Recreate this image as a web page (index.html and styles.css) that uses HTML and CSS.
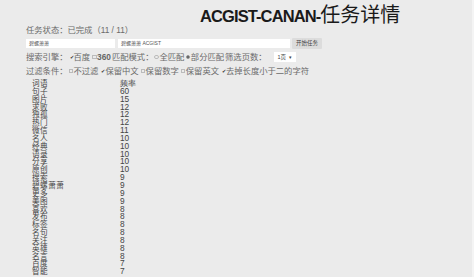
FILE: index.html
```html
<!DOCTYPE html>
<html>
<head>
<meta charset="utf-8">
<link rel="stylesheet" href="styles.css">
</head>
<body>
<div class="page">
  <h1 class="title"><span class="latin">ACGIST-CANAN-</span><span class="cjk">任务详情</span></h1>
  <div class="form">
    <div class="row">任务状态：已完成（11 / 11）</div>
    <div class="row inputs">
      <div class="field field-a">碧螺萧萧</div>
      <div class="field field-b">碧螺萧萧 ACGIST</div>
      <div class="btn">开始任务</div>
    </div>
    <div class="row">
      <span>搜索引擎：</span>
      <span class="opt"><span class="cb on">✔</span>百度</span>
      <span class="opt"><span class="cb"></span><span class="num">360</span></span>
      <span>匹配模式：</span>
      <span class="opt"><span class="rb"></span>全匹配</span>
      <span class="opt"><span class="rb on"></span>部分匹配</span>
      <span>筛选页数：</span>
      <span class="select">1页 <span class="caret">▾</span></span>
    </div>
    <div class="row">
      <span>过滤条件：</span>
      <span class="opt"><span class="cb"></span>不过滤</span>
      <span class="opt"><span class="cb on">✔</span>保留中文</span>
      <span class="opt"><span class="cb"></span>保留数字</span>
      <span class="opt"><span class="cb"></span>保留英文</span>
      <span class="opt"><span class="cb on">✔</span>去掉长度小于二的字符</span>
    </div>
  </div>
  <div class="words">
    <div class="w head">词语</div><div class="f head">频率</div>
    <div class="w">句子</div><div class="f">60</div>
    <div class="w">图片</div><div class="f">15</div>
    <div class="w">求败</div><div class="f">12</div>
    <div class="w">独孤</div><div class="f">12</div>
    <div class="w">热门</div><div class="f">12</div>
    <div class="w">微信</div><div class="f">11</div>
    <div class="w">名人</div><div class="f">10</div>
    <div class="w">经典</div><div class="f">10</div>
    <div class="w">语录</div><div class="f">10</div>
    <div class="w">分享</div><div class="f">10</div>
    <div class="w">原创</div><div class="f">10</div>
    <div class="w">搜索</div><div class="f">9</div>
    <div class="w">碧螺萧萧</div><div class="f">9</div>
    <div class="w">更多</div><div class="f">9</div>
    <div class="w">美图</div><div class="f">9</div>
    <div class="w">喜欢</div><div class="f">8</div>
    <div class="w">发布</div><div class="f">8</div>
    <div class="w">标签</div><div class="f">8</div>
    <div class="w">名句</div><div class="f">8</div>
    <div class="w">关注</div><div class="f">8</div>
    <div class="w">英雄</div><div class="f">8</div>
    <div class="w">名言</div><div class="f">8</div>
    <div class="w">百度</div><div class="f">7</div>
    <div class="w">智能</div><div class="f">7</div>
  </div>
</div>
</body>
</html>
```

FILE: styles.css
```css
html, body {
  margin: 0;
  padding: 0;
  height: 100%;
  overflow: hidden;
}
body {
  background: #ebebeb;
  font-family: "Liberation Sans", "Noto Sans CJK SC", sans-serif;
  border-right: 2px solid #f4f4f4;
  box-sizing: border-box;
}
.page {
  padding-left: 26px;
}
.title {
  margin: 0;
  height: 22px;
  line-height: 22px;
  padding-left: 174px;
  white-space: nowrap;
  color: #1a1a1a;
}
.title .latin {
  font-family: "Liberation Sans", sans-serif;
  font-weight: bold;
  font-size: 16.5px;
  letter-spacing: -0.9px;
}
.title .cjk {
  font-family: "Noto Sans CJK SC", sans-serif;
  font-weight: normal;
  font-size: 20px;
}
.form {
  color: #6a6a6a;
  font-size: 8.3px;
}
.row {
  display: flex;
  align-items: center;
  height: 10px;
  line-height: 10px;
  margin-top: 3px;
  white-space: nowrap;
}
.row:last-child {
  margin-top: 4px;
}
.inputs {
  height: 11px;
  gap: 2px;
}
.field {
  background: #fff;
  height: 9px;
  line-height: 9px;
  font-size: 5px;
  color: #555;
  padding-left: 3px;
  box-sizing: border-box;
}
.field-a { width: 89px; }
.field-b { width: 172px; margin-left: 1px; }
.btn {
  background: #dcdcdc;
  height: 11px;
  line-height: 11px;
  font-size: 5.5px;
  color: #444;
  padding: 0 4px;
  border-radius: 1px;
}
.opt {
  display: inline-flex;
  align-items: center;
  margin-right: 1px;
}
.cb, .rb {
  display: inline-block;
  width: 2.5px;
  height: 2.5px;
  border: 0.5px solid #bbb;
  margin: 0 0.5px 0 1px;
  font-size: 4.5px;
  line-height: 3px;
  color: #333;
  text-align: center;
}
.cb.on {
  border-color: transparent;
}
.rb {
  border-radius: 50%;
}
.rb.on {
  width: 2px;
  height: 2px;
  background: #555;
  border-color: #999;
}
.num {
  font-weight: bold;
  color: #666;
}
.select {
  background: #fff;
  height: 10px;
  line-height: 10px;
  font-size: 5.5px;
  color: #444;
  padding: 0 4px;
  margin-left: 7px;
  width: 22px;
  box-sizing: border-box;
  display: inline-flex;
  justify-content: space-between;
}
.caret {
  font-size: 5px;
}
.words {
  display: grid;
  grid-template-columns: 88px auto;
  grid-auto-rows: 7.85px;
  margin-top: 4px;
  padding-left: 6px;
  font-size: 7.6px;
  letter-spacing: 0.5px;
  line-height: 7.85px;
  color: #444;
}
.words .f {
  font-family: "Liberation Sans", sans-serif;
  font-size: 8.3px;
  letter-spacing: 0;
}
```
